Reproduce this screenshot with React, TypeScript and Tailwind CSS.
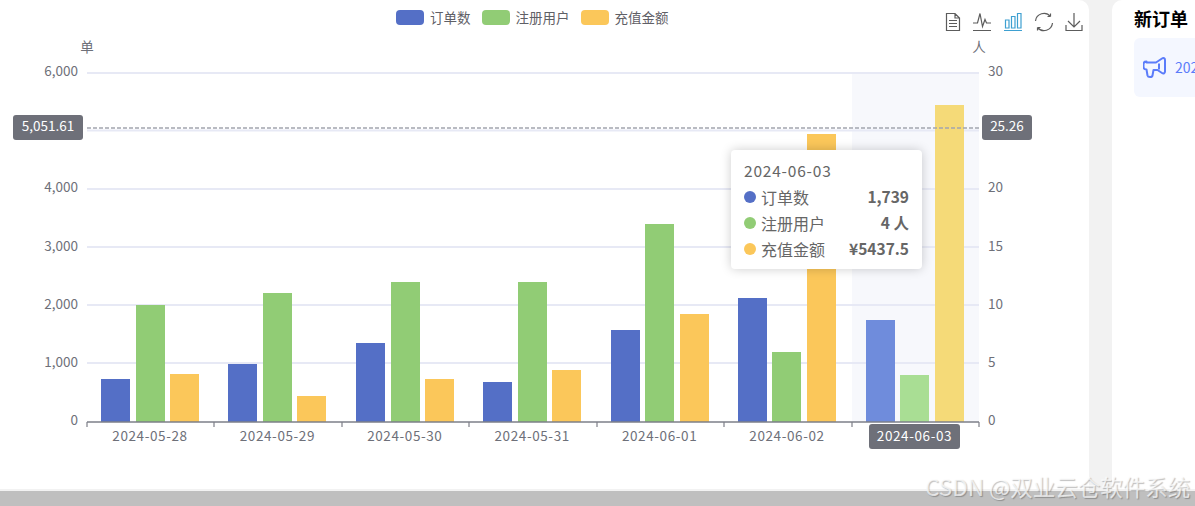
const font = { fontFamily: '"Noto Sans CJK SC", "Liberation Sans", sans-serif' }

const dates = ["2024-05-28", "2024-05-29", "2024-05-30", "2024-05-31", "2024-06-01", "2024-06-02", "2024-06-03"]

// bar tops in px, per category: orders, users, recharge
const tops = [
  [379, 305, 374],
  [364, 293, 396],
  [343, 282, 379],
  [382, 282, 370],
  [330, 224, 314],
  [298, 352, 134],
  [320, 375, 105],
]
const barLefts = [
  [101, 136, 170],
  [228, 263, 297],
  [356, 391, 425],
  [483, 518, 552],
  [611, 645, 680],
  [738, 772, 807],
  [866, 900, 935],
]
const colors = ["#546fc6", "#91cc75", "#fbc75a"]
const hoverColors = ["#6f8cdc", "#a9de94", "#f5da78"]

const leftTicks = ["6,000", "", "4,000", "3,000", "2,000", "1,000", "0"]
const rightTicks = ["30", "", "20", "15", "10", "5", "0"]
const gridY = [73, 130.5, 189, 247, 305, 363]
const tickX = [87, 214, 342, 469, 597, 724, 852, 979]

function Legend() {
  const items = [
    { name: "订单数", color: "bg-[#546fc6]" },
    { name: "注册用户", color: "bg-[#91cc75]" },
    { name: "充值金额", color: "bg-[#fbc75a]" },
  ]
  return (
    <div className="ml-[396px] flex items-center gap-[11px] pt-[10px] self-start">
      {items.map((item) => (
        <div key={item.name} className="flex items-center gap-[6px]">
          <span className={`h-[15px] w-[28px] rounded-[4px] ${item.color}`}></span>
          <span className="text-[13.5px] leading-[15px] text-[#5f6066]">{item.name}</span>
        </div>
      ))}
    </div>
  )
}

function Toolbox() {
  return (
    <div className="absolute left-[945px] top-[12px] flex items-start">
      <svg width="16" height="20" viewBox="0 0 16 20" fill="none" stroke="#5c5c5c" strokeWidth="1.2">
        <path d="M1.5 1.5h8.5l4.5 4.5v12.5h-13zM10 1.5v4.5h4.5M4 8.5h8M4 11.5h8M4 14.5h8" />
      </svg>
      <svg width="20" height="20" viewBox="0 0 20 20" fill="none" stroke="#5c5c5c" strokeWidth="1.2" className="ml-[11px]">
        <path d="M1 11h4.500l2.500-9.500 2.500 13 2.500-7 1.500 3.500h4.500M1 18.500h18" />
      </svg>
      <svg width="18" height="20" viewBox="0 0 18 20" fill="none" stroke="#3ea0d1" strokeWidth="1.2" className="ml-[12px]">
        <path d="M1.5 8h3.500v8h-3.500zM7.500 4.500h3.500v11.500h-3.500zM13.500 1.500h3.500v14.500h-3.500zM0 18.500h18" />
      </svg>
      <svg width="20" height="20" viewBox="0 0 20 20" fill="none" stroke="#5c5c5c" strokeWidth="1.2" className="ml-[12px]">
        <path d="M16.5 4.500A8.500 8.500 0 0 0 1.500 9M16.500 4.500V1.500M16.500 4.500h-3M3.500 15.500A8.500 8.500 0 0 0 18.500 11M3.500 15.500v3M3.500 15.500h3" />
      </svg>
      <svg width="18" height="20" viewBox="0 0 18 20" fill="none" stroke="#5c5c5c" strokeWidth="1.2" className="ml-[11px]">
        <path d="M9 1v14M3 9l6 6 6-6M1 13v5.500h16V13" />
      </svg>
    </div>
  )
}

function Chart() {
  return (
    <svg viewBox="0 33 1089 456" width="1089" height="456" className="block" style={font}>
      <rect x="852" y="73" width="127" height="349" fill="#f7f8fc" />
      {gridY.map((y) => (
        <line key={y} x1="87" x2="979" y1={y} y2={y} stroke="#e7e9f5" strokeWidth="2" />
      ))}

      {/* bars */}
      {tops.map((row, i) =>
        row.map((top, j) => (
          <rect
            key={`${i}-${j}`}
            x={barLefts[i][j]}
            y={top}
            width="29"
            height={422 - top}
            fill={i === 6 ? hoverColors[j] : colors[j]}
          />
        )),
      )}

      {/* x axis */}
      <line x1="87" x2="979" y1="422" y2="422" stroke="#7d7f88" strokeWidth="1.5" />
      {tickX.map((x) => (
        <line key={x} x1={x} x2={x} y1="422" y2="427" stroke="#7d7f88" strokeWidth="1.2" />
      ))}
      {dates.slice(0, 6).map((d, i) => (
        <text key={d} x={150 + i * 127.4} y="441" textAnchor="middle" fontSize="13.5" letterSpacing="0.6" fill="#6e7079">
          {d}
        </text>
      ))}

      {/* y axes */}
      {leftTicks.map((t, i) =>
        t ? (
          <text key={t} x="78" y={76 + i * 58.2} textAnchor="end" fontSize="13.5" fill="#6e7079">
            {t}
          </text>
        ) : null,
      )}
      {rightTicks.map((t, i) =>
        t ? (
          <text key={t} x="988" y={76 + i * 58.2} fontSize="13.5" fill="#6e7079">
            {t}
          </text>
        ) : null,
      )}
      <text x="87" y="52" textAnchor="middle" fontSize="13.5" fill="#6e7079">单</text>
      <text x="979" y="52" textAnchor="middle" fontSize="13.5" fill="#6e7079">人</text>

      {/* crosshair */}
      <line x1="87" x2="979" y1="128" y2="128" stroke="#a3a5ae" strokeWidth="1.5" strokeDasharray="4 2" />
      <rect x="13" y="115" width="70" height="25" rx="3" fill="#6e7079" />
      <text x="48" y="131" textAnchor="middle" fontSize="13.5" fill="#fff">5,051.61</text>
      <rect x="982" y="115" width="50" height="25" rx="3" fill="#6e7079" />
      <text x="1007" y="131" textAnchor="middle" fontSize="13.5" fill="#fff">25.26</text>
      <rect x="869" y="424" width="91" height="25" rx="3" fill="#6e7079" />
      <text x="914.5" y="441" textAnchor="middle" fontSize="13.5" letterSpacing="0.6" fill="#fff">2024-06-03</text>
    </svg>
  )
}

function Tooltip() {
  const rows = [
    { name: "订单数", value: "1,739", dot: "bg-[#546fc6]" },
    { name: "注册用户", value: "4 人", dot: "bg-[#91cc75]" },
    { name: "充值金额", value: "¥5437.5", dot: "bg-[#fbc75a]" },
  ]
  return (
    <div className="absolute left-[731px] top-[150px] h-[119px] w-[191px] rounded-[4px] bg-white px-[13px] pt-[9px] shadow-[0_0_11px_rgba(0,0,0,0.2)]">
      <div className="text-[15.5px] leading-[22px] tracking-[0.8px] text-[#666]">2024-06-03</div>
      <div className="mt-[3px] flex flex-col">
        {rows.map((row) => (
          <div key={row.name} className="flex h-[26px] items-center text-[#666]">
            <span className={`h-[12px] w-[12px] rounded-full ${row.dot}`}></span>
            <span className="ml-[5px] text-[16px]">{row.name}</span>
            <span className="ml-auto text-[15.5px] font-bold">{row.value}</span>
          </div>
        ))}
      </div>
    </div>
  )
}

export default function App() {
  return (
    <div className="relative flex h-[506px] w-[1195px] flex-col overflow-hidden bg-[#f2f2f2]" style={font}>
      <div className="flex h-[489px] justify-between">
        {/* chart card */}
        <div className="relative h-full w-[1089px] rounded-tr-[10px] bg-white">
          <div className="flex h-[33px]">
            <Legend />
          </div>
          <Toolbox />
          <Chart />
          <Tooltip />
        </div>

        {/* new orders card */}
        <div className="h-full w-[83px] rounded-tl-[10px] bg-white pl-[22px] pt-[6px]">
          <div className="whitespace-nowrap text-[18px] font-bold leading-[24px] text-black">新订单</div>
          <div className="mt-[8px] flex h-[59px] w-[200px] items-center rounded-l-[6px] bg-[#f4f7ff] pl-[9px]">
            <svg width="24" height="24" viewBox="0 0 24 24" fill="none" stroke="#5b7cfa" strokeWidth="2" strokeLinejoin="round">
              <path d="M3.5 6.5h9.500l6-4c1.500-1 3-.2 3 1.500v11.500c0 1.700-1.500 2.500-3 1.500l-4.500-3h-4l-1 5.500c-.3 2-4.500 2-5 0l-1-6c-2 0-3-1-3-2.500v-3c0-1.500 1-2.500 3-2.500z" />
              <path d="M16 7.500v6" />
            </svg>
            <span className="ml-[8px] whitespace-nowrap text-[14px] text-[#5b7cfa]">2024-06-03 新订单</span>
          </div>
        </div>
      </div>

      <div className="mt-[2px] h-[15px] bg-[#bfbfbf]"></div>

      <div className="absolute left-[925px] top-[471px] whitespace-nowrap text-[22.5px] leading-[30px] text-white/70 [text-shadow:1px_1px_1px_rgba(0,0,0,0.25)]">
        CSDN @双业云仓软件系统
      </div>
    </div>
  )
}
